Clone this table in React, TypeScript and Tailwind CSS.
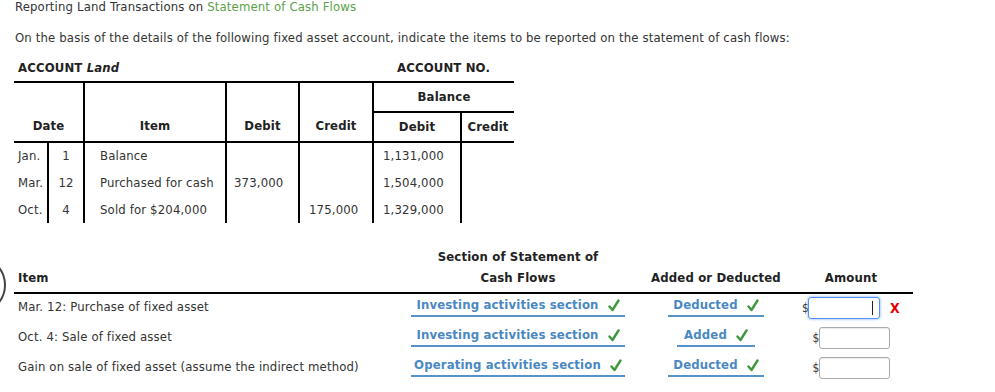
import React from 'react';

const font = { fontFamily: '"DejaVu Sans Condensed", "DejaVu Sans", sans-serif' };

const Check = () => (
  <svg width="12" height="13" viewBox="0 0 12 13" className="shrink-0">
    <path d="M1.5 7.5 L4.5 11 L10.5 1.5" fill="none" stroke="#3c9a3c" strokeWidth="2.4" strokeLinecap="round" strokeLinejoin="round" />
  </svg>
);

const Answer = ({ label, w }: { label: string; w: string }) => (
  <div className={`flex items-center justify-center gap-[9px] border-b-2 border-[#5592c8] h-[23px] pt-[1px] ${w}`}>
    <span className="font-bold text-[#4a88c2]">{label}</span>
    <Check />
  </div>
);

const ledger = [
  { m: 'Jan.', d: '1', item: 'Balance', debit: '', credit: '', bal: '1,131,000' },
  { m: 'Mar.', d: '12', item: 'Purchased for cash', debit: '373,000', credit: '', bal: '1,504,000' },
  { m: 'Oct.', d: '4', item: 'Sold for $204,000', debit: '', credit: '175,000', bal: '1,329,000' },
];

const rows = [
  { item: 'Mar. 12: Purchase of fixed asset', section: 'Investing activities section', how: 'Deducted', hw: 'w-[96px]', focused: true },
  { item: 'Oct. 4: Sale of fixed asset', section: 'Investing activities section', how: 'Added', hw: 'w-[78px]', focused: false },
  { item: 'Gain on sale of fixed asset (assume the indirect method)', section: 'Operating activities section', how: 'Deducted', hw: 'w-[96px]', focused: false },
];

export default function App() {
  return (
    <div className="relative w-[995px] h-[392px] overflow-hidden bg-white text-[13px] tracking-[0.15px] text-[#333] pl-[15px]" style={font}>
      <svg className="absolute left-0 top-[256px]" width="8" height="60" viewBox="0 0 8 60">
        <circle cx="-23" cy="29" r="28" fill="none" stroke="#444" strokeWidth="2" />
      </svg>

      <div className="leading-[14px]">
        Reporting Land Transactions on <span className="text-[#5ca14a]">Statement of Cash Flows</span>
      </div>
      <div className="leading-[14px] mt-[17px]">
        On the basis of the details of the following fixed asset account, indicate the items to be reported on the statement of cash flows:
      </div>

      <div className="w-[500px] -ml-[1px] mt-[16px]">
        <div className="flex font-bold text-[#222] leading-[14px]">
          <div className="flex-1 pl-[4px]">ACCOUNT <i>Land</i></div>
          <div className="w-[141px] text-center">ACCOUNT NO.</div>
        </div>
        <table className="mt-[6px] w-[500px] table-fixed border-collapse">
          <colgroup>
            <col className="w-[34px]" />
            <col className="w-[36px]" />
            <col className="w-[142px]" />
            <col className="w-[73px]" />
            <col className="w-[74px]" />
            <col className="w-[88px]" />
            <col className="w-[53px]" />
          </colgroup>
          <thead className="font-bold text-[#222]">
            <tr className="h-[30px] border-t-2 border-black">
              <th colSpan={2} rowSpan={2} className="border-r-2 border-b-2 border-black align-bottom pb-[6px]">Date</th>
              <th rowSpan={2} className="border-r-2 border-b-2 border-black align-bottom pb-[6px]">Item</th>
              <th rowSpan={2} className="border-r-2 border-b-2 border-black align-bottom pb-[6px]">Debit</th>
              <th rowSpan={2} className="border-r-2 border-b-2 border-black align-bottom pb-[6px]">Credit</th>
              <th colSpan={2} className="border-b-2 border-black">Balance</th>
            </tr>
            <tr className="h-[30px]">
              <th className="border-r-2 border-b-2 border-black pb-[1px]">Debit</th>
              <th className="border-b-2 border-black pb-[1px]">Credit</th>
            </tr>
          </thead>
          <tbody>
            {ledger.map(r => (
              <tr key={r.m} className="h-[27px]">
                <td className="border-r-2 border-black pl-[4px]">{r.m}</td>
                <td className="border-r-2 border-black text-center">{r.d}</td>
                <td className="border-r-2 border-black pl-[15px]">{r.item}</td>
                <td className="border-r-2 border-black pl-[7px]">{r.debit}</td>
                <td className="border-r-2 border-black pl-[9px]">{r.credit}</td>
                <td className="border-r-2 border-black pl-[9px]">{r.bal}</td>
                <td></td>
              </tr>
            ))}
          </tbody>
        </table>
      </div>

      <div className="w-[899px] -ml-[1px] mt-[23px]">
        <div className="grid grid-cols-[394px_220px_176px_94px] items-end border-b-2 border-black pb-[4px] font-bold text-[#222] leading-[21px]">
          <div className="pl-[4px]">Item</div>
          <div className="text-center">Section of Statement of<br />Cash Flows</div>
          <div className="text-center">Added or Deducted</div>
          <div className="text-center">Amount</div>
        </div>
        {rows.map(r => (
          <div key={r.item} className="grid grid-cols-[394px_220px_176px_94px] items-start h-[30px]">
            <div className="pl-[4px] h-[23px] flex items-center pt-[3px]">{r.item}</div>
            <div className="flex justify-center"><Answer label={r.section} w="w-[214px]" /></div>
            <div className="flex justify-center"><Answer label={r.how} w={r.hw} /></div>
            <div className="flex items-center justify-center h-[28px]">
              {r.focused ? (
                <>
                  <span className="text-[12px] mr-[-1px]">$</span>
                  <div className="relative shrink-0 w-[72px] h-[22px] rounded-[3px] border border-[#4d90fe] shadow-[0_0_3px_#6aa8f5]">
                    <span className="absolute right-[6px] top-[3px] w-[1px] h-[14px] bg-[#222]" />
                  </div>
                  <span className="ml-[10px] font-bold text-[#e60000] text-[14px]">X</span>
                </>
              ) : (
                <>
                  <span className="text-[12px] mr-[-1px]">$</span>
                  <div className="shrink-0 w-[71px] h-[22px] rounded-[3px] border border-[#aaa] shadow-[inset_0_1px_1px_rgba(0,0,0,0.08)]" />
                </>
              )}
            </div>
          </div>
        ))}
      </div>
    </div>
  );
}
